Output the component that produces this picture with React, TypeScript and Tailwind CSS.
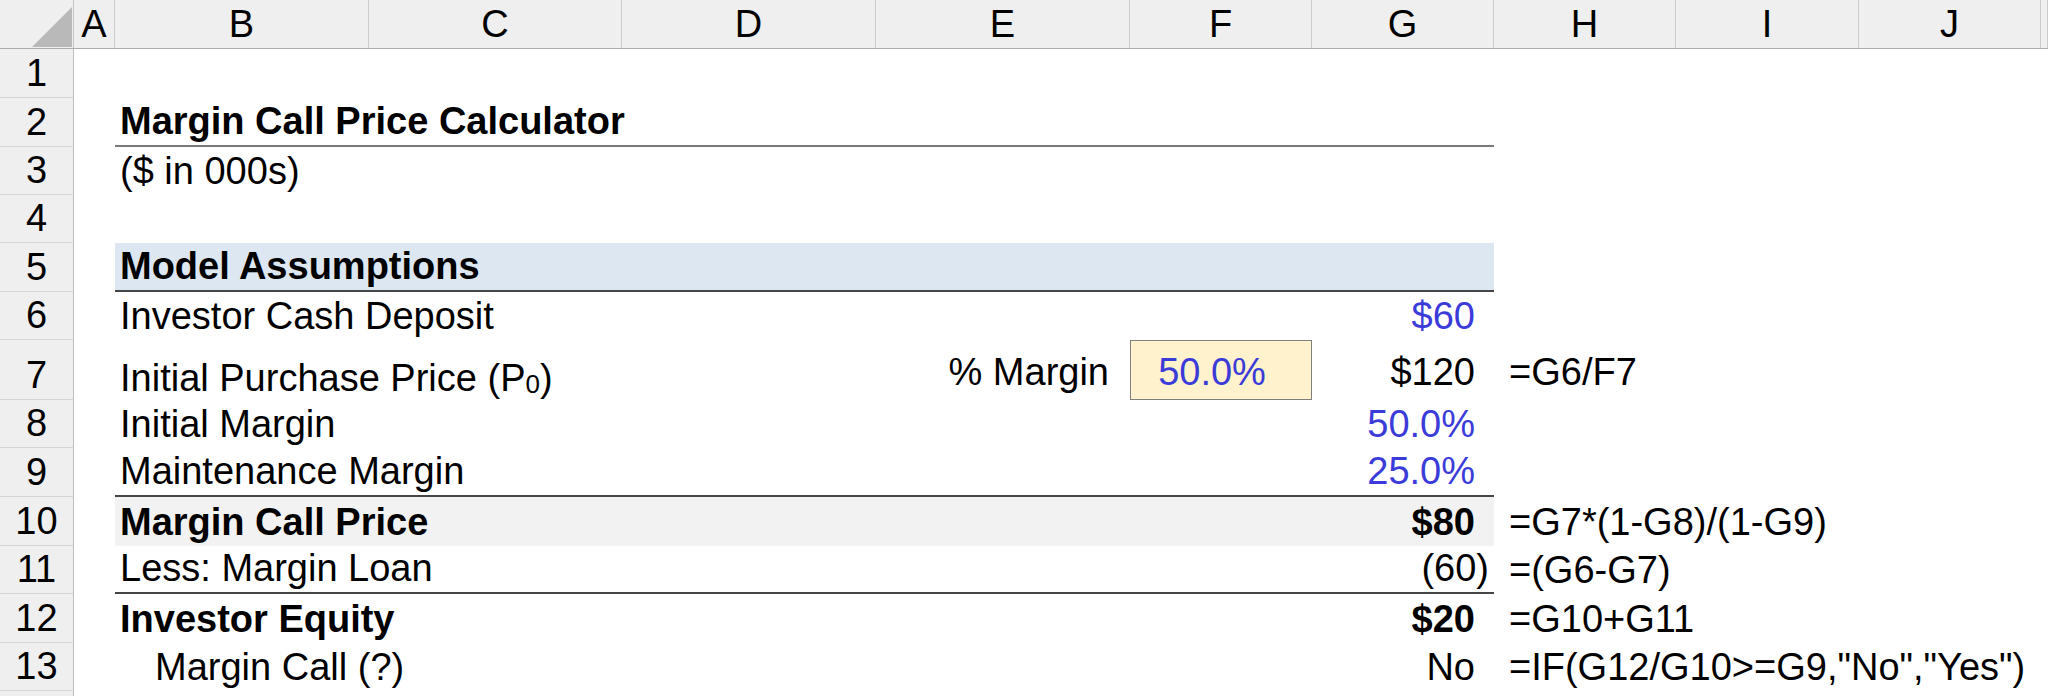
import React from "react";

type Row = {
  n: number;
  label?: string;
  h: string;
  b?: React.ReactNode;
  bBold?: boolean;
  bIndent?: boolean;
  e?: string;
  f?: string;
  g?: string;
  gBold?: boolean;
  gBlue?: boolean;
  gParen?: boolean;
  hf?: string;
  fill?: string;
  line?: string;
  mid?: boolean;
};

const rows: Row[] = [
  { n: 1, label: "1", h: "h-[49px]" },
  { n: 2, label: "2", h: "h-[49px]", b: "Margin Call Price Calculator", bBold: true, line: "border-b-2 border-[#7a7a7a]" },
  { n: 3, label: "3", h: "h-[48px]", b: "($ in 000s)" },
  { n: 4, label: "4", h: "h-[48px]" },
  { n: 5, label: "5", h: "h-[49px]", b: "Model Assumptions", bBold: true, fill: "bg-[#dde7f1]", line: "border-b-2 border-[#454545]" },
  { n: 6, label: "6", h: "h-[48px]", b: "Investor Cash Deposit", g: "$60", gBlue: true },
  {
    n: 7,
    label: "7",
    h: "h-[60px]",
    b: (
      <>
        Initial Purchase Price (P<span className="text-[26px] align-[-8px]">0</span>)
      </>
    ),
    e: "% Margin",
    f: "50.0%",
    g: "$120",
    hf: "=G6/F7",
    mid: true,
  },
  { n: 8, label: "8", h: "h-[48px]", b: "Initial Margin", g: "50.0%", gBlue: true },
  { n: 9, label: "9", h: "h-[49px]", b: "Maintenance Margin", g: "25.0%", gBlue: true, line: "border-b-2 border-[#454545]" },
  { n: 10, label: "10", h: "h-[49px]", b: "Margin Call Price", bBold: true, g: "$80", gBold: true, fill: "bg-[#f2f2f2]", hf: "=G7*(1-G8)/(1-G9)" },
  { n: 11, label: "11", h: "h-[48px]", b: "Less: Margin Loan", g: "(60)", gParen: true, hf: "=(G6-G7)", line: "border-b-2 border-[#454545]" },
  { n: 12, label: "12", h: "h-[49px]", b: "Investor Equity", bBold: true, g: "$20", gBold: true, hf: "=G10+G11" },
  { n: 13, label: "13", h: "h-[48px]", b: "Margin Call (?)", bIndent: true, g: "No", hf: '=IF(G12/G10>=G9,"No","Yes")' },
  { n: 14, h: "h-[48px]" },
];

const letters = ["A", "B", "C", "D", "E", "F", "G", "H", "I", "J", ""];

function HeaderRow() {
  return (
    <div className="grid grid-cols-[74px_41px_254px_253px_254px_254px_182px_182px_182px_183px_182px_1fr] h-[49px] bg-[#efefef] border-b border-[#ababab]">
      <div className="border-r border-[#c4c4c4]">
        <svg width="73" height="48" viewBox="0 0 73 48" className="block">
          <polygon points="32,47 72,47 72,7" fill="#b9b9b9" />
        </svg>
      </div>
      {letters.map((l, i) => (
        <div
          key={i}
          className="flex items-end justify-center pb-[5px] border-r border-[#cbcbcb]"
        >
          {l}
        </div>
      ))}
    </div>
  );
}

function SheetRow({ r }: { r: Row }) {
  const endPad = r.mid ? "pb-[9px]" : "pb-[5px]";
  return (
    <div className={`grid grid-cols-[74px_41px_1379px_182px_182px_183px_182px_1fr] ${r.h}`}>
      <div className="flex items-end justify-center pb-[5px] bg-[#efefef] border-r border-b border-r-[#bdbdbd] border-b-[#d5d5d5]">
        {r.label}
      </div>
      <div />
      <div className={`grid grid-cols-[254px_253px_254px_254px_182px_182px] ${r.fill ?? ""} ${r.line ?? ""}`}>
        <div
          className={`col-span-3 flex items-end whitespace-nowrap ${r.mid ? "pb-[3px]" : "pb-[5px]"} ${
            r.bIndent ? "pl-[40px]" : "pl-[5px]"
          } ${r.bBold ? "font-bold" : ""}`}
        >
          {r.b}
        </div>
        <div className={`flex items-end justify-end whitespace-nowrap pr-[21px] ${endPad}`}>{r.e}</div>
        {r.f ? (
          <div className="flex items-end justify-center pr-[18px] pb-[8px] bg-[#fff2cc] border border-[#7f7f7f] text-[#3b3bd9]">
            {r.f}
          </div>
        ) : (
          <div />
        )}
        <div
          className={`flex items-end justify-end whitespace-nowrap ${endPad} ${r.gParen ? "pr-[5px]" : "pr-[19px]"} ${
            r.gBold ? "font-bold" : ""
          } ${r.gBlue ? "text-[#3b3bd9]" : ""}`}
        >
          {r.g}
        </div>
      </div>
      <div className={`flex items-end whitespace-nowrap pl-[15px] ${endPad}`}>{r.hf}</div>
      <div />
      <div />
      <div />
    </div>
  );
}

export default function App() {
  return (
    <div className="w-[2048px] h-[696px] overflow-hidden bg-white text-black text-[38px] leading-none font-['Liberation_Sans',Arial,sans-serif]">
      <HeaderRow />
      {rows.map((r) => (
        <SheetRow key={r.n} r={r} />
      ))}
    </div>
  );
}
